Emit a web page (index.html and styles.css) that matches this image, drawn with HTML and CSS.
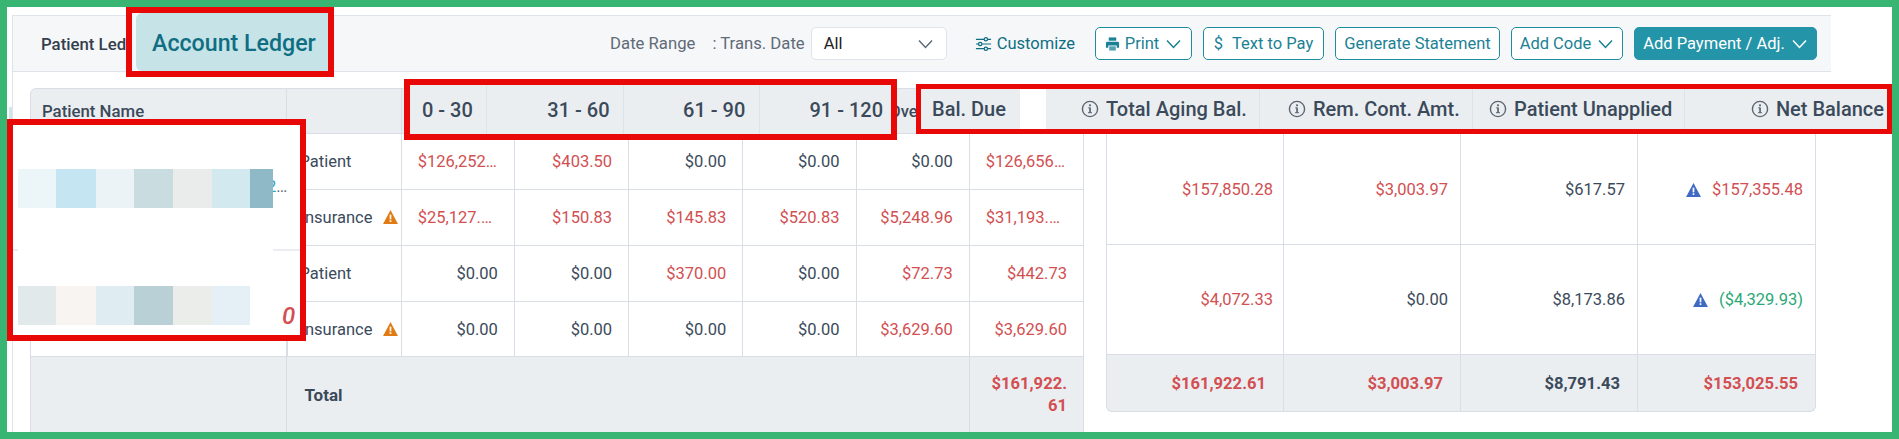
FILE: index.html
```html
<!DOCTYPE html>
<html lang="en">
<head>
<meta charset="utf-8">
<title>Account Ledger</title>
<link rel="stylesheet" href="styles.css">
</head>
<body>
<svg class="defs" width="0" height="0" aria-hidden="true">
  <symbol id="chev" viewBox="0 0 16 10"><polyline points="1.5,1.5 8,8.5 14.5,1.5" fill="none" stroke="currentColor" stroke-width="1.5"/></symbol>
  <symbol id="info" viewBox="0 0 18 18"><circle cx="9" cy="9" r="7.6" fill="none" stroke="#5a6672" stroke-width="1.4"/><rect x="8.2" y="7.6" width="1.7" height="5.2" fill="#5a6672"/><rect x="7" y="12.2" width="4" height="1" fill="#5a6672"/><rect x="7.2" y="7.4" width="2" height="1" fill="#5a6672"/><circle cx="9" cy="5.3" r="1.1" fill="#5a6672"/></symbol>
  <symbol id="warn" viewBox="0 0 16 15"><path d="M8 0 16 15H0Z" fill="currentColor"/><rect x="7.1" y="5" width="1.8" height="5" fill="#fff"/><rect x="7.1" y="11" width="1.8" height="1.8" fill="#fff"/></symbol>
</svg>
<div class="page">
  <header class="toolbar">
    <div class="tab-plain">Patient Ledger</div>
    <div class="filters">
      <span class="lbl">Date Range</span>
      <span class="lbl lbl-trans">: Trans. Date</span>
      <div class="select"><span>All</span><svg class="chev chev-sel"><use href="#chev"/></svg></div>
      <div class="customize">
        <svg class="sliders" viewBox="0 0 18 16"><g fill="none" stroke="currentColor" stroke-width="1.3"><path d="M1 3h16M1 8h16M1 13h16"/><circle cx="11.5" cy="3" r="1.8" fill="#f6f7f9"/><circle cx="5.5" cy="8" r="1.8" fill="#f6f7f9"/><circle cx="11.5" cy="13" r="1.8" fill="#f6f7f9"/></g></svg>
        <span>Customize</span>
      </div>
      <button class="btn btn-print"><svg class="printer" viewBox="0 0 16 16"><path d="M4 1h8v3.5H4Z" fill="currentColor"/><path d="M2.5 5.5h11A1.5 1.5 0 0 1 15 7v5h-2.5V9.5h-9V12H1V7a1.5 1.5 0 0 1 1.5-1.5Z" fill="currentColor"/><path d="M4.5 10.5h7V15h-7Z" fill="currentColor" opacity=".75"/></svg>Print<svg class="chev"><use href="#chev"/></svg></button>
      <button class="btn btn-text"><span class="dollar">$</span>Text to Pay</button>
      <button class="btn btn-gen">Generate Statement</button>
      <button class="btn btn-code">Add Code<svg class="chev"><use href="#chev"/></svg></button>
      <button class="btn btn-pay">Add Payment / Adj.<svg class="chev"><use href="#chev"/></svg></button>
    </div>
  </header>

  <main class="content">
    <table class="grid aging">
      <colgroup><col class="c-name"><col class="c-type"><col class="c-a"><col class="c-b"><col class="c-c"><col class="c-d"><col class="c-e"><col class="c-f"></colgroup>
      <thead>
        <tr class="r-head"><th class="left">Patient Name</th><th></th><th></th><th></th><th></th><th></th><th class="th-over">Over 120</th><th></th></tr>
      </thead>
      <tbody>
        <tr class="r-a"><td rowspan="2"></td><td class="left">Patient</td><td class="red">$126,252.83</td><td class="red">$403.50</td><td>$0.00</td><td>$0.00</td><td>$0.00</td><td class="red">$126,656.33</td></tr>
        <tr class="r-a"><td class="left">Insurance<svg class="warn"><use href="#warn"/></svg></td><td class="red">$25,127.50</td><td class="red">$150.83</td><td class="red">$145.83</td><td class="red">$520.83</td><td class="red">$5,248.96</td><td class="red">$31,193.95</td></tr>
        <tr class="r-a"><td rowspan="2"></td><td class="left">Patient</td><td>$0.00</td><td>$0.00</td><td class="red">$370.00</td><td>$0.00</td><td class="red">$72.73</td><td class="red">$442.73</td></tr>
        <tr class="r-b"><td class="left">Insurance<svg class="warn"><use href="#warn"/></svg></td><td>$0.00</td><td>$0.00</td><td>$0.00</td><td>$0.00</td><td class="red">$3,629.60</td><td class="red">$3,629.60</td></tr>
      </tbody>
      <tfoot>
        <tr class="r-total"><td></td><td class="left" colspan="6">Total</td><td class="red wrap">$161,922.<wbr>61</td></tr>
      </tfoot>
    </table>

    <table class="grid summary">
      <colgroup><col class="s-a"><col class="s-b"><col class="s-c"><col class="s-d"></colgroup>
      <thead>
        <tr class="r-head"><th></th><th></th><th></th><th></th></tr>
      </thead>
      <tbody>
        <tr class="r-s1"><td class="red">$157,850.28</td><td class="red">$3,003.97</td><td>$617.57</td><td class="red"><svg class="warn blue"><use href="#warn"/></svg>$157,355.48</td></tr>
        <tr class="r-s2"><td class="red">$4,072.33</td><td>$0.00</td><td>$8,173.86</td><td class="green"><svg class="warn blue"><use href="#warn"/></svg>($4,329.93)</td></tr>
      </tbody>
      <tfoot>
        <tr class="r-s3"><td class="red">$161,922.61</td><td class="red">$3,003.97</td><td>$8,791.43</td><td class="red">$153,025.55</td></tr>
      </tfoot>
    </table>
  </main>

  <div class="mark mark-tab"><div class="tab-active">Account Ledger</div></div>

  <div class="mark mark-buckets">
    <div class="hc hc-1">0 - 30</div>
    <div class="hc hc-2">31 - 60</div>
    <div class="hc hc-3">61 - 90</div>
    <div class="hc hc-4">91 - 120</div>
  </div>

  <div class="mark mark-totals">
    <div class="hc hc-bal">Bal. Due</div>
    <div class="hc-gap"></div>
    <div class="hc hc-aging"><svg class="info"><use href="#info"/></svg>Total Aging Bal.</div>
    <div class="hc hc-rem"><svg class="info"><use href="#info"/></svg>Rem. Cont. Amt.</div>
    <div class="hc hc-unap"><svg class="info"><use href="#info"/></svg>Patient Unapplied</div>
    <div class="hc hc-net"><svg class="info"><use href="#info"/></svg>Net Balance</div>
  </div>

  <div class="mark mark-names">
    <div class="nrow nrow-1">
      <i class="tile w38 a1"></i><i class="tile w40 a2"></i><i class="tile w38 a3"></i><i class="tile w39 a4"></i><i class="tile w39 a5"></i><i class="tile w38 a6"></i><i class="tile w23 a7"></i><span class="more"><span class="more-digit">2</span>…</span>
    </div>
    <div class="nsep"><i class="seg seg-s"></i><i class="seg-gap"></i><i class="seg seg-l"></i></div>
    <div class="nrow nrow-2">
      <i class="tile w38 b1"></i><i class="tile w40 b2"></i><i class="tile w38 b3"></i><i class="tile w39 b4"></i><i class="tile w39 b5"></i><i class="tile w38 b6"></i><span class="zero">0</span>
    </div>
  </div>
  <div class="edge-strip"></div>
</div>
</body>
</html>
```

FILE: styles.css
```css
* { box-sizing: border-box; }
html, body { margin: 0; padding: 0; background: #fff; }
body { font-family: Roboto, "Liberation Sans", sans-serif; color: #3b4a5a; }
.defs { position: absolute; }

.page {
  position: relative;
  width: 1899px;
  height: 439px;
  overflow: hidden;
  border: 7px solid #38b573;
  padding: 8px 61px 0 5px;
  background: #fff;
}

/* toolbar */
.toolbar {
  display: flex;
  align-items: center;
  height: 57px;
  background: #f6f7f9;
  border-top: 1px solid #dfe3ea;
  border-bottom: 1px solid #dfe3ea;
  border-left: 1px solid #dfe3ea;
  padding: 0 14px 0 28px;
}
.tab-plain { font-size: 16.8px; font-weight: 500; color: #333f4d; white-space: nowrap; }
.filters { display: flex; align-items: center; margin-left: auto; font-size: 16.5px; }
.lbl { color: #5f6b78; font-size: 16.7px; white-space: nowrap; }
.lbl-trans { margin-left: 17px; margin-right: 6px; }
.select {
  display: flex; align-items: center; justify-content: space-between;
  width: 136px; height: 33px; padding: 0 12px;
  background: #fff; border: 1px solid #dfe3ea; border-radius: 5px;
  color: #222; font-size: 16.5px; margin-right: 28px;
}
.customize { display: flex; align-items: center; gap: 5px; color: #0f6e82; margin-right: 20px; font-size: 16.5px; }
.sliders { width: 17px; height: 16px; }
.chev { width: 17px; height: 10px; margin-left: 6px; color: currentColor; }
.chev-sel { color: #5f6b78; }
.btn {
  display: flex; align-items: center; justify-content: center;
  height: 33px; padding: 0;
  font: 400 16.5px Roboto, "Liberation Sans", sans-serif;
  color: #1b8195; background: #fff;
  border: 1px solid #1f8ba0; border-radius: 5px;
  margin-right: 11px; white-space: nowrap;
}
.printer { width: 15px; height: 16px; margin-right: 5px; }
.dollar { margin-right: 9px; }
.btn-print { width: 97px; }
.btn-text { width: 121px; }
.btn-gen { width: 165px; }
.btn-code { width: 112px; }
.btn-pay { width: 183px; margin-right: 0; background: #2494a8; color: #fff; border-color: #2494a8; }

/* tables */
.content {
  display: flex;
  align-items: flex-start;
  gap: 22px;
  height: 360px;
  border-left: 1px solid #dfe3ea;
  padding: 16px 0 0 17px;
}
.grid {
  table-layout: fixed;
  border-collapse: separate;
  border-spacing: 0;
  font-size: 16.5px;
  flex: none;
}
.grid th, .grid td {
  border-right: 1px solid #d9dee6;
  border-bottom: 1px solid #d9dee6;
  padding: 0 16px;
  text-align: right;
  overflow: hidden;
  white-space: nowrap;
  text-overflow: ellipsis;
  color: #3b4a5a;
  font-weight: 400;
}
.grid th { background: #ebeef1; font-weight: 500; font-size: 16.5px; border-top: 1px solid #d9dee6; }
.grid tr > :first-child { border-left: 1px solid #d9dee6; }
.grid tfoot td { background: #ebeef1; font-weight: 700; font-size: 16.6px; }
.grid .left { text-align: left; padding: 0 0 0 12px; text-overflow: clip; }
.grid .th-over { padding-right: 13px; }
.grid .red { color: #d24f52; }
.grid .green { color: #2aa876; }
.grid .wrap { white-space: normal; line-height: 22px; }

.aging { width: 1054px; }
.aging th:first-child { border-top-left-radius: 6px; font-size: 16.8px; padding-left: 11px; }
.c-name { width: 257px; }
.c-type { width: 114px; }
.c-a { width: 113px; }
.c-b { width: 114px; }
.c-c { width: 114px; }
.c-d { width: 113px; }
.c-e { width: 113px; }
.c-f { width: 114px; }
.r-head { height: 46px; }
.r-a { height: 56px; }
.r-b { height: 55px; }
.r-total { height: 76px; }
.grid .r-total .left { font-size: 17px; padding-left: 17px; }

.summary { width: 710px; }
.s-a { width: 178px; }
.s-b { width: 177px; }
.s-c { width: 177px; }
.s-d { width: 178px; }
.summary td { padding: 0 12px 0 0; }
.summary tbody td:first-child { padding-right: 10px; }
.summary tfoot td { padding-right: 17px; }
.summary tfoot tr > :first-child { border-bottom-left-radius: 6px; }
.summary tfoot tr > :last-child { border-bottom-right-radius: 6px; }
.r-s1 { height: 111px; }
.r-s2 { height: 110px; }
.r-s3 { height: 57px; }

.warn { width: 15px; height: 14px; color: #e07b12; vertical-align: -1px; margin-left: 11px; }
.warn.blue { color: #3e6ac4; width: 15px; height: 14px; margin: 0 11px 0 0; vertical-align: -2px; }

/* highlight marks on top of the table */
.mark { position: absolute; border: 6px solid #e80808; background: #fff; }
.mark-tab { left: 119px; top: 0; width: 208px; height: 70px; background: #f6f7f9; padding-left: 4px; }
.tab-active {
  height: 58px;
  background: #c6e3e8;
  border-top-left-radius: 6px;
  border-bottom-left-radius: 6px;
  color: #0f6e82;
  font-size: 23.2px;
  font-weight: 500;
  line-height: 60px;
  padding-left: 16px;
  white-space: nowrap;
}
.mark-buckets { left: 397px; top: 72px; width: 493px; height: 61px; display: flex; background: #ebeef1; }
.mark-totals { left: 909px; top: 77px; width: 976px; height: 50px; display: flex; background: #ebeef1; border-width: 5px; }
.hc {
  display: flex; align-items: center; justify-content: flex-end;
  font-size: 20px; font-weight: 500; color: #3b4a5a; white-space: nowrap;
  background: #ebeef1;
}
.mark-buckets .hc { border-right: 1px solid #dfe3e8; }
.mark-buckets .hc-4 { border-right: 0; }
.hc-1 { width: 77px; padding-right: 13px; }
.hc-2 { width: 137px; padding-right: 13px; }
.hc-3 { width: 137px; padding-right: 14px; }
.hc-4 { width: 131px; padding-right: 8px; }
.hc-bal { width: 99px; justify-content: flex-start; padding-left: 11px; }
.hc-gap { width: 26px; background: #fff; }
.hc-aging { width: 214px; justify-content: flex-start; padding-left: 35px; }
.hc-rem { width: 213px; justify-content: flex-start; padding-left: 28px; }
.hc-unap { width: 212px; justify-content: flex-start; padding-left: 16px; }
.hc-net { flex: 1; padding-right: 3px; }
.mark-totals .hc-aging, .mark-totals .hc-rem, .mark-totals .hc-unap { border-right: 1px solid #dfe3e8; }
.info { width: 18px; height: 18px; margin-right: 7px; flex: none; }

.mark-names { left: 0; top: 112px; width: 299px; height: 222px; }
.nrow { display: flex; padding-left: 5px; align-items: flex-start; }
.nrow-1 { height: 124px; padding-top: 44px; }
.nrow-2 { height: 86px; padding-top: 35px; }
.nsep { display: flex; height: 2px; }
.seg { background: #ebedf1; display: block; }
.seg-s { width: 5px; }
.seg-gap { width: 255px; }
.seg-l { flex: 1; }
.tile { display: block; height: 39px; flex: none; position: relative; z-index: 1; }
.w38 { width: 38px; } .w39 { width: 39px; } .w40 { width: 40px; } .w23 { width: 23px; }
.a1 { background: #ecf5f8; } .a2 { background: #c6e5f2; } .a3 { background: #ebf3f6; } .a4 { background: #c9dde1; }
.a5 { background: #e9ecea; } .a6 { background: #d3e9f0; } .a7 { background: #8fb9c6; }
.b1 { background: #e1e9ea; } .b2 { background: #f7f4f2; } .b3 { background: #dfedf2; } .b4 { background: #b8d0d6; }
.b5 { background: #ebedea; } .b6 { background: #e5f0f6; }
.more { font-size: 16.5px; line-height: 20px; color: #5c6a78; margin-top: 8px; margin-left: -6px; white-space: nowrap; }
.more-digit { color: #2a9fc0; }
.zero { margin-left: 32px; margin-top: 18px; font-size: 24px; font-weight: 500; font-style: italic; color: #d24f52; line-height: 24px; }
.edge-strip { position: absolute; left: 2px; top: 100px; width: 3px; height: 12px; background: #cfe6ea; }
```
